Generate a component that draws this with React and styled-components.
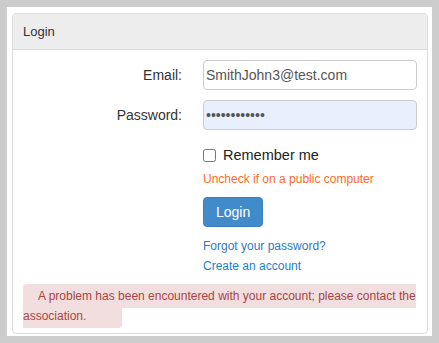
import React from "react";
import styled, { createGlobalStyle } from "styled-components";

const GlobalStyle = createGlobalStyle`
  html, body {
    margin: 0;
    padding: 0;
    background: #cccccc;
    font-family: "Liberation Sans", Arial, sans-serif;
  }
`;

const Frame = styled.div`
  box-sizing: border-box;
  margin: 7px;
  width: 425px;
  height: 329px;
  background: #ffffff;
  padding: 6px 4px 2px 5px;
`;

const Panel = styled.div`
  box-sizing: border-box;
  width: 416px;
  height: 321px;
  border: 1px solid #dddddd;
  border-radius: 4px;
  overflow: hidden;
`;

const PanelHeading = styled.div`
  box-sizing: border-box;
  height: 36px;
  display: flex;
  align-items: center;
  padding: 0 10px;
  background: #ededed;
  border-bottom: 1px solid #dddddd;
  color: #333333;
  font-size: 13px;
`;

const PanelBody = styled.div`
  padding: 10px 10px 0 10px;
`;

const Form = styled.form`
  display: grid;
  grid-template-columns: 159px 1fr;
  column-gap: 21px;
  row-gap: 0;
`;

const Label = styled.label`
  display: flex;
  align-items: center;
  justify-content: flex-end;
  height: 30px;
  margin-bottom: ${(p) => p.$mb || 0}px;
  font-size: 14px;
  color: #333333;
`;

const Input = styled.input`
  box-sizing: border-box;
  height: 30px;
  width: 100%;
  margin: 0 0 ${(p) => p.$mb || 0}px 0;
  padding: 0 2px;
  border: 1px solid #cccccc;
  border-radius: 4px;
  background: ${(p) => (p.$filled ? "#e8f0fe" : "#ffffff")};
  font-family: "Liberation Sans", Arial, sans-serif;
  font-size: 14px;
  color: #555555;
  outline: none;
`;

const Cell = styled.div`
  grid-column: 2;
  display: flex;
  flex-direction: column;
  align-items: flex-start;
`;

const CheckRow = styled.label`
  display: flex;
  align-items: center;
  gap: 7px;
  margin-top: 17px;
  font-size: 14.5px;
  line-height: 17px;
  color: #222222;
`;

const Checkbox = styled.input`
  margin: 0;
  width: 13px;
  height: 13px;
`;

const Hint = styled.div`
  margin-top: 8px;
  font-size: 12px;
  line-height: 14px;
  color: #ff6a1f;
`;

const Button = styled.button`
  margin-top: 11px;
  box-sizing: border-box;
  height: 30px;
  padding: 0 12px;
  background: #428bca;
  border: 1px solid #3a80bd;
  border-radius: 4px;
  color: #ffffff;
  font-family: "Liberation Sans", Arial, sans-serif;
  font-size: 14px;
`;

const Links = styled.div`
  margin-top: 12px;
  display: flex;
  flex-direction: column;
  gap: 6px;
`;

const Link = styled.a`
  font-size: 12px;
  line-height: 14px;
  color: ${(p) => p.$color};
  text-decoration: none;
`;

const Message = styled.div`
  margin-top: 13px;
  font-size: 12px;
  line-height: 20px;
`;

const Alert = styled.span`
  padding: 5px 36px 5px 15px;
  background: #f2dede;
  color: #a94442;
  border-radius: 4px;
`;

export default function App() {
  return (
    <>
      <GlobalStyle />
      <Frame>
        <Panel>
          <PanelHeading>Login</PanelHeading>
          <PanelBody>
            <Form onSubmit={(e) => e.preventDefault()}>
              <Label htmlFor="email" $mb={10}>Email:</Label>
              <Input id="email" type="text" defaultValue="SmithJohn3@test.com" $mb={10} />
              <Label htmlFor="password">Password:</Label>
              <Input id="password" type="password" defaultValue="password1234" $filled />
              <Cell>
                <CheckRow>
                  <Checkbox type="checkbox" />
                  Remember me
                </CheckRow>
                <Hint>Uncheck if on a public computer</Hint>
                <Button type="submit">Login</Button>
                <Links>
                  <Link href="#" $color="#3079c0">Forgot your password?</Link>
                  <Link href="#" $color="#1b7fd1">Create an account</Link>
                </Links>
              </Cell>
            </Form>
            <Message>
              <Alert>
                A problem has been encountered with your account; please contact the association.
              </Alert>
            </Message>
          </PanelBody>
        </Panel>
      </Frame>
    </>
  );
}
